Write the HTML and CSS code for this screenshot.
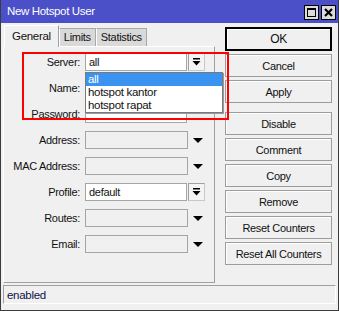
FILE: index.html
```html
<!DOCTYPE html>
<html lang="en">
<head>
    <meta charset="UTF-8">
    <title>New Hotspot User</title>
    <link rel="stylesheet" href="styles.css">
</head>
<body>

    <div class="window">
        <div class="titlebar">
            <span class="title">New Hotspot User</span>
            <div class="title-buttons">
                <span class="tbtn">
                    <svg width="9" height="9" viewBox="0 0 9 9"><rect x="0.5" y="0.5" width="8" height="8" fill="none" stroke="#000"/><rect x="0" y="0" width="9" height="2" fill="#000"/></svg>
                </span>
                <span class="tbtn">
                    <svg width="9" height="9" viewBox="0 0 9 9"><path d="M1 1 L8 8 M8 1 L1 8" stroke="#000" stroke-width="2.2"/></svg>
                </span>
            </div>
        </div>

        <div class="main">
            <div class="left">
                <div class="tabs">
                    <div class="tab active">General</div>
                    <div class="tab">Limits</div>
                    <div class="tab">Statistics</div>
                </div>
                <div class="panel">
                    <div class="row">
                        <label>Server:</label>
                        <div class="field select">
                            all
                            <!-- open list of the server select -->
                            <div class="dropdown">
                                <div class="dd-item selected">all</div>
                                <div class="dd-item">hotspot kantor</div>
                                <div class="dd-item">hotspot rapat</div>
                            </div>
                        </div>
                        <span class="dd-btn"><svg width="9" height="8" viewBox="0 0 9 8"><rect x="1" y="0" width="7" height="1.5" fill="#000"/><path d="M0.5 3 L8.5 3 L4.5 7.5 Z" fill="#000"/></svg></span>
                    </div>
                    <div class="row">
                        <label>Name:</label>
                        <div class="field select"></div>
                    </div>
                    <div class="row">
                        <label>Password:</label>
                        <div class="field select"></div>
                    </div>
                    <div class="row">
                        <label>Address:</label>
                        <div class="field"></div>
                        <span class="arrow"></span>
                    </div>
                    <div class="row">
                        <label>MAC Address:</label>
                        <div class="field"></div>
                        <span class="arrow"></span>
                    </div>
                    <div class="row">
                        <label>Profile:</label>
                        <div class="field select">default</div>
                        <span class="dd-btn"><svg width="9" height="8" viewBox="0 0 9 8"><rect x="1" y="0" width="7" height="1.5" fill="#000"/><path d="M0.5 3 L8.5 3 L4.5 7.5 Z" fill="#000"/></svg></span>
                    </div>
                    <div class="row">
                        <label>Routes:</label>
                        <div class="field"></div>
                        <span class="arrow"></span>
                    </div>
                    <div class="row">
                        <label>Email:</label>
                        <div class="field"></div>
                        <span class="arrow"></span>
                    </div>
                </div>
            </div>

            <div class="buttons">
                <button class="btn btn-default">OK</button>
                <button class="btn">Cancel</button>
                <button class="btn">Apply</button>
                <button class="btn btn-sep">Disable</button>
                <button class="btn">Comment</button>
                <button class="btn">Copy</button>
                <button class="btn">Remove</button>
                <button class="btn">Reset Counters</button>
                <button class="btn">Reset All Counters</button>
            </div>
        </div>

        <div class="status">enabled</div>

        <div class="highlight"></div>
    </div>

</body>
</html>
```

FILE: styles.css
```css
* {
    box-sizing: border-box;
}

html, body {
    margin: 0;
    padding: 0;
}

body {
    font-family: "Liberation Sans", Arial, sans-serif;
    font-size: 11px;
    letter-spacing: -0.3px;
    color: #111;
    background: #f0f0f0;
}

/*--------------------
Window
--------------------*/
.window {
    position: relative;
    width: 339px;
    height: 311px;
    background: #f0f0f0;
    border: 1px solid #3c3c3c;
    border-top: none;
    display: flex;
    flex-direction: column;
}

.titlebar {
    height: 23px;
    flex: 0 0 23px;
    background: #4b50c8;
    color: #fff;
    display: flex;
    align-items: center;
    justify-content: space-between;
    padding: 0 2px 0 6px;
}

.title {
    font-size: 11.5px;
    letter-spacing: -0.35px;
    padding-bottom: 1px;
}

.title-buttons {
    display: flex;
    gap: 2px;
    padding-top: 1px;
}

.tbtn {
    width: 15px;
    height: 15px;
    background: #dcdcdc;
    border: 1px solid #000;
    display: flex;
    align-items: center;
    justify-content: center;
}

/*--------------------
Main area
--------------------*/
.main {
    display: flex;
    height: 260px;
    padding: 2px 0 0 2px;
    gap: 10px;
}

.left {
    width: 212px;
    display: flex;
    flex-direction: column;
}

.tabs {
    display: flex;
    align-items: flex-end;
    height: 21px;
    padding-left: 1px;
    position: relative;
    z-index: 2;
}

.tab {
    height: 18px;
    padding: 2px 4px 0 4px;
    background: #d9d9d9;
    border: 1px solid #a8a8a8;
    border-bottom: none;
    border-left-color: #fff;
    font-size: 11px;
}

.tab.active {
    height: 22px;
    margin-bottom: -1px;
    background: #f0f0f0;
    padding: 4px 7px 0 7px;
    font-size: 11.5px;
    border-top-color: #fff;
    border-right-color: #a0a0a0;
}

.panel {
    flex: 1;
    border: 1px solid #a0a0a0;
    border-top-color: #fff;
    border-left-color: #fff;
    padding-top: 6px;
    display: flex;
    flex-direction: column;
    gap: 8px;
}

/*--------------------
Form rows
--------------------*/
.row {
    display: flex;
    align-items: center;
    height: 18px;
}

.row label {
    width: 76px;
    text-align: right;
    margin-right: 5px;
}

.field {
    position: relative;
    width: 103px;
    height: 18px;
    border: 1px solid #a5a5a5;
    background: #f0f0f0;
    padding: 2px 0 0 3px;
    color: #111;
}

.field.select {
    width: 102px;
    background: #fff;
}

.dd-btn {
    width: 17px;
    height: 18px;
    margin-left: 1px;
    border: 1px solid #c8c8c8;
    border-left-color: #a0a0a0;
    border-top-color: #a0a0a0;
    background: #f4f4f4;
    display: flex;
    align-items: center;
    justify-content: center;
}

.arrow {
    margin-left: 5px;
    width: 0;
    height: 0;
    border-left: 5px solid transparent;
    border-right: 5px solid transparent;
    border-top: 5px solid #000;
}

/*--------------------
Open list
--------------------*/
.dropdown {
    position: absolute;
    z-index: 5;
    top: 18px;
    left: -1px;
    width: 138px;
    background: #fff;
    border: 1px solid #7a7a7a;
    box-shadow: 1px 1px 0 #9a9a9a;
    font-size: 11.5px;
}

.dd-item {
    height: 13px;
    line-height: 13px;
    padding-left: 2px;
}

.dd-item.selected {
    background: #3a93f0;
    color: #fff;
}

/*--------------------
Buttons
--------------------*/
.buttons {
    width: 107px;
    padding-top: 2px;
    display: flex;
    flex-direction: column;
    gap: 3px;
}

.btn {
    height: 23px;
    margin: 0;
    padding: 0;
    font-family: inherit;
    font-size: 11px;
    letter-spacing: -0.3px;
    color: #111;
    background: #f0f0f0;
    border: 1px solid #9c9c9c;
    box-shadow: inset 1px 1px 0 #fff;
}

.btn-default {
    height: 24px;
    border: 2px solid #000;
    font-size: 12px;
}

.btn-sep {
    margin-top: 6px;
}

/*--------------------
Status bar
--------------------*/
.status {
    margin: 2px 2px 0 2px;
    height: 19px;
    border: 1px solid #fff;
    border-top-color: #a0a0a0;
    border-left-color: #a0a0a0;
    padding: 3px 0 0 3px;
    font-size: 11.5px;
    color: #10104a;
}

/*--------------------
Red highlight
--------------------*/
.highlight {
    position: absolute;
    z-index: 10;
    left: 21px;
    top: 52px;
    width: 207px;
    height: 68px;
    border: 2px solid #f00;
}
```
